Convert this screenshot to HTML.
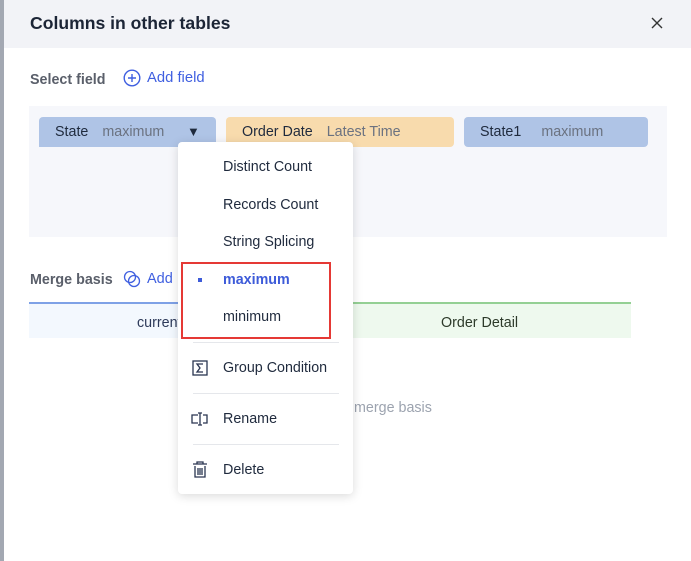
<!DOCTYPE html>
<html><head><style>
*{margin:0;padding:0;box-sizing:border-box}
body{width:691px;height:561px;position:relative;overflow:hidden;background:#fff;font-family:"Liberation Sans",sans-serif;font-size:14px;color:#1f2a3d}
.a{position:absolute;white-space:nowrap}
.chip{position:absolute;top:117px;height:30px;border-radius:4px;line-height:30px;padding-left:16px;font-size:14.3px}
.g{color:#6b7280}
.mi{position:absolute;left:223px;font-size:14.3px;color:#1f2a3d;line-height:16px}
.dv{position:absolute;left:193px;width:146px;height:1px;background:#e5e7eb}
</style></head><body>
<div class="a" style="left:0;top:0;width:4px;height:561px;background:#a3a8b2"></div>
<div class="a" style="left:4px;top:0;width:687px;height:48px;background:#f2f3f7"></div>
<div class="a" style="left:30px;top:13px;font-size:17.6px;font-weight:bold;color:#1c2536">Columns in other tables</div>
<svg class="a" style="left:651px;top:17px" width="12" height="12" viewBox="0 0 12 12"><path d="M1 1L11 11M11 1L1 11" stroke="#333" stroke-width="1.4"/></svg>
<div class="a" style="left:30px;top:72px;font-weight:bold;color:#5a5f6a;font-size:14.3px">Select field</div>
<svg class="a" style="left:123px;top:69px" width="18" height="18" viewBox="0 0 18 18"><circle cx="9" cy="9" r="7.8" fill="none" stroke="#3f5fe0" stroke-width="1.4"/><path d="M9 5v8M5 9h8" stroke="#3f5fe0" stroke-width="1.4"/></svg>
<div class="a" style="left:147px;top:70px;color:#3f5fe0;font-size:14.8px">Add field</div>
<div class="a" style="left:29px;top:106px;width:638px;height:131px;background:#f6f7fb"></div>
<div class="chip" style="left:39px;width:177px;background:#afc4e6;border-radius:4px 4px 0 0">State <span class="g" style="margin-left:10px">maximum</span><span style="position:absolute;left:148px;top:0;font-size:13px">▼</span></div>
<div class="chip" style="left:226px;width:228px;background:#f8dbad">Order Date <span class="g" style="margin-left:10px">Latest Time</span></div>
<div class="chip" style="left:464px;width:184px;background:#afc4e6">State1 <span class="g" style="margin-left:16px">maximum</span></div>
<div class="a" style="left:30px;top:272px;font-weight:bold;color:#5a5f6a;font-size:14.3px">Merge basis</div>
<svg class="a" style="left:123px;top:270px" width="18" height="18" viewBox="0 0 18 18"><circle cx="7" cy="7" r="5.5" fill="none" stroke="#3f5fe0" stroke-width="1.3"/><circle cx="11" cy="11" r="5.5" fill="none" stroke="#3f5fe0" stroke-width="1.3"/></svg>
<div class="a" style="left:147px;top:271px;color:#3f5fe0;font-size:14.5px">Add</div>
<div class="a" style="left:29px;top:302px;width:302px;height:36px;background:#f3f8fe;border-top:2px solid #7ea1e6"></div>
<div class="a" style="left:137px;top:315px;color:#2d3a5a;font-size:14.3px">current</div>
<div class="a" style="left:331px;top:302px;width:300px;height:36px;background:#eef9ee;border-top:2px solid #94d094"></div>
<div class="a" style="left:441px;top:315px;color:#2d3a2a;font-size:14.3px">Order Detail</div>
<div class="a" style="left:354px;top:400px;color:#9ca3af;font-size:14.3px">merge basis</div>
<div class="a" style="left:178px;top:142px;width:175px;height:352px;background:#fff;border-radius:4px;box-shadow:0 2px 10px rgba(0,0,0,.15)"></div>
<div class="mi" style="top:159px">Distinct Count</div>
<div class="mi" style="top:197px">Records Count</div>
<div class="mi" style="top:234px">String Splicing</div>
<div class="a" style="left:198px;top:278px;width:4px;height:4px;background:#3d5bd9"></div>
<div class="mi" style="top:272px;font-weight:bold;color:#3d5bd9">maximum</div>
<div class="mi" style="top:309px">minimum</div>
<div class="a" style="left:181px;top:262px;width:150px;height:77px;border:2px solid #e53935"></div>
<div class="dv" style="top:342px"></div>
<svg class="a" style="left:192px;top:360px" width="16" height="16" viewBox="0 0 16 16"><rect x="1" y="1" width="14" height="14" fill="none" stroke="#2a3550" stroke-width="1.3"/><path d="M11 4H5l3 4-3 4h6" fill="none" stroke="#2a3550" stroke-width="1.3"/></svg>
<div class="mi" style="top:360px">Group Condition</div>
<div class="dv" style="top:393px"></div>
<svg class="a" style="left:191px;top:410px" width="18" height="18" viewBox="0 0 18 18"><path d="M7 5H1v8h6M12 5h4v8h-4M9 3v12M7 3h4M7 15h4" fill="none" stroke="#2a3550" stroke-width="1.3"/></svg>
<div class="mi" style="top:411px">Rename</div>
<div class="dv" style="top:444px"></div>
<svg class="a" style="left:192px;top:461px" width="16" height="17" viewBox="0 0 16 17"><path d="M1 3h14M5 3V1h6v2M3 5v11h10V5M6 7v7M8 7v7M10 7v7" fill="none" stroke="#2a3550" stroke-width="1.3"/></svg>
<div class="mi" style="top:462px">Delete</div>
</body></html>
